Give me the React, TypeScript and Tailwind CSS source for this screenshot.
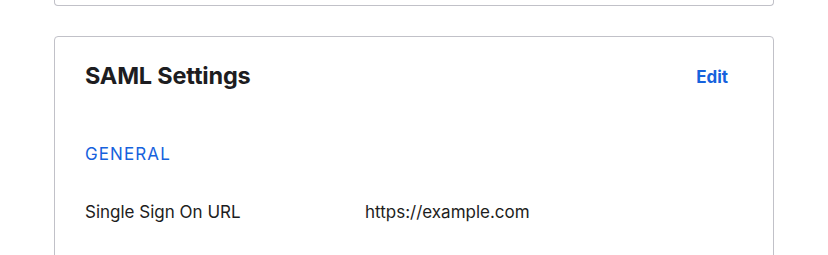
export default function App() {
  return (
    <div className="min-h-screen bg-white font-['Inter','Liberation_Sans',sans-serif] text-[#1d1d21]">
      <div className="w-[720px] mx-auto">
        {/* end of the card above */}
        <div className="h-[6px] border-x border-b border-[#c1c1c8] rounded-b-[4px]" />

        <div className="mt-[30px] border border-[#c1c1c8] rounded-[4px] pl-[30px] pr-[45px] pt-[22px] pb-10">
          <div className="flex items-center justify-between h-[34px]">
            <h2 className="text-[23.5px] font-bold leading-[34px] tracking-[-0.2px]">SAML Settings</h2>
            <button className="text-[17px] font-bold text-[#1662dd] leading-6 mt-[2px]">Edit</button>
          </div>

          <h3 className="mt-[49px] text-[17px] leading-6 text-[#1662dd] tracking-[1.1px]">GENERAL</h3>

          <div className="mt-[34px] flex text-[17px] leading-6">
            <div className="w-[280px]">Single Sign On URL</div>
            <div>https://example.com</div>
          </div>
        </div>
      </div>
    </div>
  )
}
